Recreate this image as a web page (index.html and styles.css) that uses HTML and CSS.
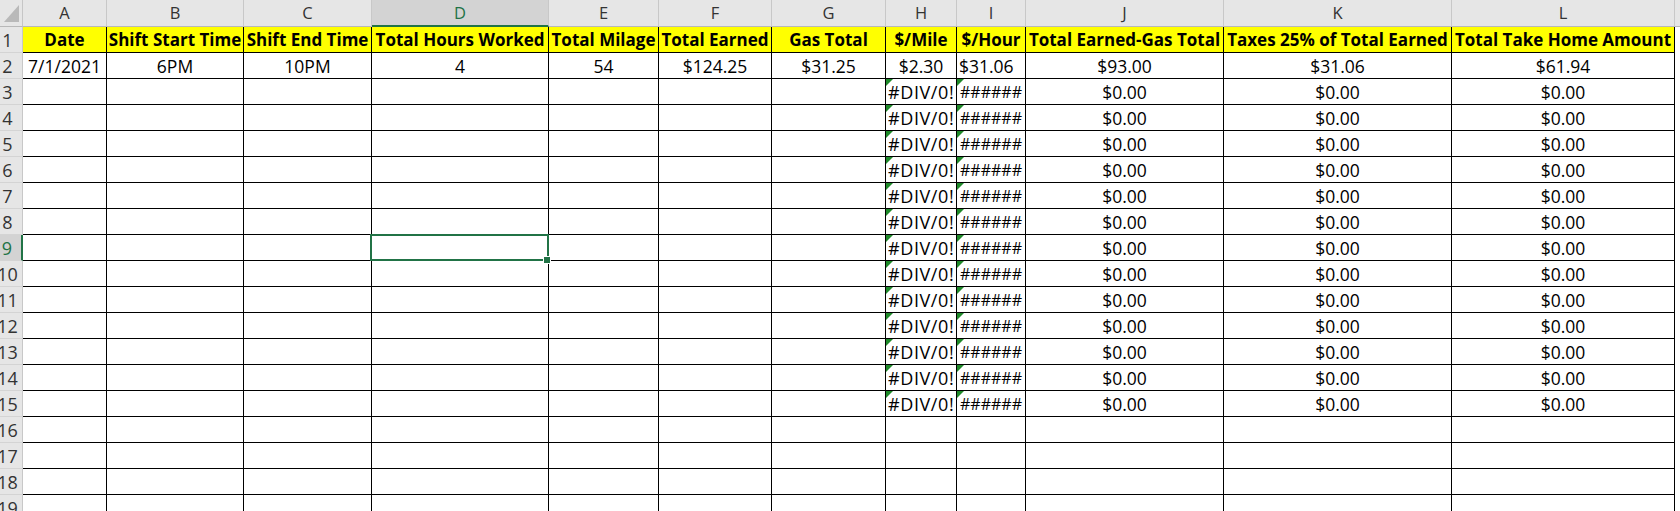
FILE: index.html
```html
<!DOCTYPE html>
<html>
<head>
<meta charset="utf-8">
<link rel="stylesheet" href="styles.css">
</head>
<body>
<div class="sheet">
  <div class="corner"></div>
  <div class="ch">A</div><div class="ch">B</div><div class="ch">C</div><div class="ch sel">D</div><div class="ch">E</div><div class="ch">F</div><div class="ch">G</div><div class="ch">H</div><div class="ch">I</div><div class="ch">J</div><div class="ch">K</div><div class="ch">L</div><div class="ch m"></div>

  <div class="rh">1</div>
  <div class="hd">Date</div><div class="hd">Shift Start Time</div><div class="hd">Shift End Time</div><div class="hd">Total Hours Worked</div><div class="hd">Total Milage</div><div class="hd">Total Earned</div><div class="hd">Gas Total</div><div class="hd">$/Mile</div><div class="hd">$/Hour</div><div class="hd">Total Earned-Gas Total</div><div class="hd">Taxes 25% of Total Earned</div><div class="hd">Total Take Home Amount</div><div class="m"></div>

  <div class="rh">2</div>
  <div class="c">7/1/2021</div><div class="c">6PM</div><div class="c">10PM</div><div class="c">4</div><div class="c">54</div><div class="c">$124.25</div><div class="c">$31.25</div><div class="c">$2.30</div><div class="c l">$31.06</div><div class="c">$93.00</div><div class="c">$31.06</div><div class="c">$61.94</div><div class="m"></div>

  <div class="rh">3</div>
  <div class="c"></div><div class="c"></div><div class="c"></div><div class="c"></div><div class="c"></div><div class="c"></div><div class="c"></div><div class="c l err dv">#DIV/0!</div><div class="c l err hs">######</div><div class="c">$0.00</div><div class="c">$0.00</div><div class="c">$0.00</div><div class="m"></div>

  <div class="rh">4</div>
  <div class="c"></div><div class="c"></div><div class="c"></div><div class="c"></div><div class="c"></div><div class="c"></div><div class="c"></div><div class="c l err dv">#DIV/0!</div><div class="c l err hs">######</div><div class="c">$0.00</div><div class="c">$0.00</div><div class="c">$0.00</div><div class="m"></div>

  <div class="rh">5</div>
  <div class="c"></div><div class="c"></div><div class="c"></div><div class="c"></div><div class="c"></div><div class="c"></div><div class="c"></div><div class="c l err dv">#DIV/0!</div><div class="c l err hs">######</div><div class="c">$0.00</div><div class="c">$0.00</div><div class="c">$0.00</div><div class="m"></div>

  <div class="rh">6</div>
  <div class="c"></div><div class="c"></div><div class="c"></div><div class="c"></div><div class="c"></div><div class="c"></div><div class="c"></div><div class="c l err dv">#DIV/0!</div><div class="c l err hs">######</div><div class="c">$0.00</div><div class="c">$0.00</div><div class="c">$0.00</div><div class="m"></div>

  <div class="rh">7</div>
  <div class="c"></div><div class="c"></div><div class="c"></div><div class="c"></div><div class="c"></div><div class="c"></div><div class="c"></div><div class="c l err dv">#DIV/0!</div><div class="c l err hs">######</div><div class="c">$0.00</div><div class="c">$0.00</div><div class="c">$0.00</div><div class="m"></div>

  <div class="rh">8</div>
  <div class="c"></div><div class="c"></div><div class="c"></div><div class="c"></div><div class="c"></div><div class="c"></div><div class="c"></div><div class="c l err dv">#DIV/0!</div><div class="c l err hs">######</div><div class="c">$0.00</div><div class="c">$0.00</div><div class="c">$0.00</div><div class="m"></div>

  <div class="rh sel">9</div>
  <div class="c"></div><div class="c"></div><div class="c"></div><div class="c active"></div><div class="c"></div><div class="c"></div><div class="c"></div><div class="c l err dv">#DIV/0!</div><div class="c l err hs">######</div><div class="c">$0.00</div><div class="c">$0.00</div><div class="c">$0.00</div><div class="m"></div>

  <div class="rh">10</div>
  <div class="c"></div><div class="c"></div><div class="c"></div><div class="c"></div><div class="c"></div><div class="c"></div><div class="c"></div><div class="c l err dv">#DIV/0!</div><div class="c l err hs">######</div><div class="c">$0.00</div><div class="c">$0.00</div><div class="c">$0.00</div><div class="m"></div>

  <div class="rh">11</div>
  <div class="c"></div><div class="c"></div><div class="c"></div><div class="c"></div><div class="c"></div><div class="c"></div><div class="c"></div><div class="c l err dv">#DIV/0!</div><div class="c l err hs">######</div><div class="c">$0.00</div><div class="c">$0.00</div><div class="c">$0.00</div><div class="m"></div>

  <div class="rh">12</div>
  <div class="c"></div><div class="c"></div><div class="c"></div><div class="c"></div><div class="c"></div><div class="c"></div><div class="c"></div><div class="c l err dv">#DIV/0!</div><div class="c l err hs">######</div><div class="c">$0.00</div><div class="c">$0.00</div><div class="c">$0.00</div><div class="m"></div>

  <div class="rh">13</div>
  <div class="c"></div><div class="c"></div><div class="c"></div><div class="c"></div><div class="c"></div><div class="c"></div><div class="c"></div><div class="c l err dv">#DIV/0!</div><div class="c l err hs">######</div><div class="c">$0.00</div><div class="c">$0.00</div><div class="c">$0.00</div><div class="m"></div>

  <div class="rh">14</div>
  <div class="c"></div><div class="c"></div><div class="c"></div><div class="c"></div><div class="c"></div><div class="c"></div><div class="c"></div><div class="c l err dv">#DIV/0!</div><div class="c l err hs">######</div><div class="c">$0.00</div><div class="c">$0.00</div><div class="c">$0.00</div><div class="m"></div>

  <div class="rh">15</div>
  <div class="c"></div><div class="c"></div><div class="c"></div><div class="c"></div><div class="c"></div><div class="c"></div><div class="c"></div><div class="c l err dv">#DIV/0!</div><div class="c l err hs">######</div><div class="c">$0.00</div><div class="c">$0.00</div><div class="c">$0.00</div><div class="m"></div>

  <div class="rh">16</div>
  <div class="c"></div><div class="c"></div><div class="c"></div><div class="c"></div><div class="c"></div><div class="c"></div><div class="c"></div><div class="c"></div><div class="c"></div><div class="c"></div><div class="c"></div><div class="c"></div><div class="m"></div>

  <div class="rh">17</div>
  <div class="c"></div><div class="c"></div><div class="c"></div><div class="c"></div><div class="c"></div><div class="c"></div><div class="c"></div><div class="c"></div><div class="c"></div><div class="c"></div><div class="c"></div><div class="c"></div><div class="m"></div>

  <div class="rh">18</div>
  <div class="c"></div><div class="c"></div><div class="c"></div><div class="c"></div><div class="c"></div><div class="c"></div><div class="c"></div><div class="c"></div><div class="c"></div><div class="c"></div><div class="c"></div><div class="c"></div><div class="m"></div>

  <div class="rh">19</div>
  <div class="c"></div><div class="c"></div><div class="c"></div><div class="c"></div><div class="c"></div><div class="c"></div><div class="c"></div><div class="c"></div><div class="c"></div><div class="c"></div><div class="c"></div><div class="c"></div><div class="m"></div>
</div>
</body>
</html>
```

FILE: styles.css
```css
html, body {
  margin: 0;
  padding: 0;
  background: #ffffff;
  overflow: hidden;
}

body {
  width: 1680px;
  height: 511px;
  font-family: "Open Sans", "Noto Sans", sans-serif;
  color: #000;
}

.sheet {
  display: grid;
  grid-template-columns: 30px 84px 137px 128px 177px 110px 113px 114px 71px 69px 198px 228px 223px 1fr;
  grid-template-rows: 27px repeat(19, 26px);
  width: 1687px;
  margin-left: -7px;
}

.sheet > div {
  box-sizing: border-box;
  white-space: nowrap;
  overflow: hidden;
  font-size: 17.5px;
}

.corner {
  background: #e6e6e6;
  border-right: 1px solid #c6c6c6;
  border-bottom: 1px solid #b8b8b8;
  position: relative;
}

.corner::after {
  content: "";
  position: absolute;
  right: 3px;
  bottom: 4px;
  width: 0;
  height: 0;
  border-left: 15px solid transparent;
  border-bottom: 17px solid #b9b9b9;
}

.sheet > .ch {
  background: #e6e6e6;
  color: #333;
  text-align: center;
  line-height: 26px;
  font-size: 16.5px;
  border-right: 1px solid #c8c8c8;
  border-bottom: 1px solid #b8b8b8;
}

.sheet > .ch.sel {
  background: #d3d3d3;
  color: #217346;
  border-bottom: 2px solid #217346;
}

.sheet > .ch.m {
  border-right: none;
}

.sheet > .rh {
  background: #e6e6e6;
  color: #333;
  text-align: center;
  line-height: 27px;
  font-size: 18px;
  border-right: 1px solid #c8c8c8;
  border-bottom: 1px solid #d4d4d4;
}

.sheet > .rh.sel {
  background: #d3d3d3;
  color: #217346;
  border-right: 2px solid #217346;
}

.sheet > .hd {
  background: #ffff00;
  font-weight: 700;
  font-size: 17px;
  text-align: center;
  line-height: 26px;
  border-right: 1px solid #000;
  border-bottom: 1px solid #000;
}

.c {
  text-align: center;
  line-height: 27px;
  border-right: 1px solid #000;
  border-bottom: 1px solid #000;
}

.c.l {
  text-align: left;
  padding-left: 2px;
}

.sheet > .dv {
  font-size: 18px;
  letter-spacing: 0.6px;
}

.sheet > .hs {
  font-size: 16px;
  padding-left: 3px;
}

.err {
  position: relative;
}

.err::before {
  content: "";
  position: absolute;
  left: 0;
  top: 0;
  width: 0;
  height: 0;
  border-top: 7px solid #1f8a2a;
  border-right: 7px solid transparent;
}

.m {
  background: #fff;
}

.sheet > .active {
  overflow: visible;
  position: relative;
}

.active::after {
  content: "";
  position: absolute;
  left: -2px;
  top: -1px;
  right: -1px;
  bottom: -1px;
  border: 2px solid #217346;
}

.active::before {
  content: "";
  position: absolute;
  right: -3px;
  bottom: -4px;
  width: 6px;
  height: 6px;
  background: #217346;
  border: 1px solid #fff;
  z-index: 2;
}
```
